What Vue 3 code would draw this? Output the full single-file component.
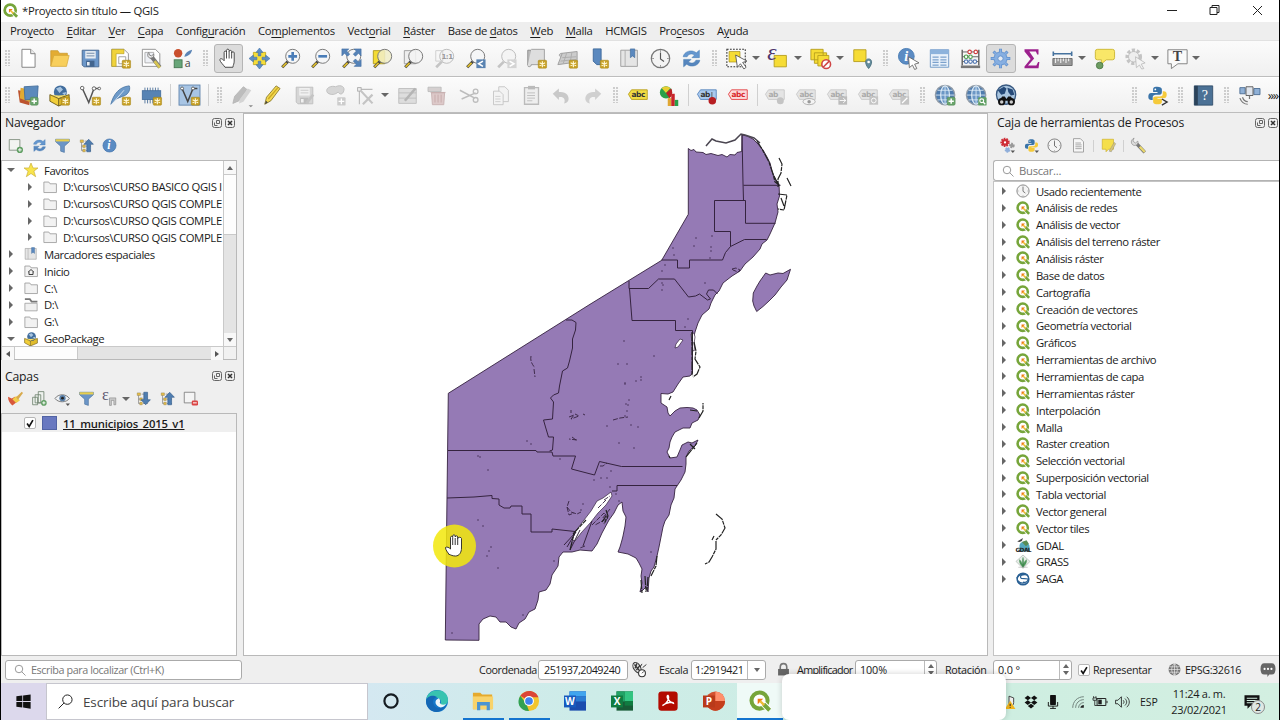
<script setup>
import { ref } from "vue";

// Shared icon fragments, all on a 24x24 grid.
const star =
  '<rect x="14" y="14" width="9.500" height="9" rx="1" fill="#c9a227" stroke="#a58212" stroke-width=".6"/><path d="M18.700 15v7M15.600 16.800l6.200 3.500M15.600 20.300l6.200-3.500" stroke="#fff8d8" stroke-width="1.300"/>';
const plus =
  '<rect x="14" y="14" width="9" height="9" rx="1.500" fill="#6aa56c" stroke="#4c8450" stroke-width=".6"/><path d="M18.500 15.500v6M15.500 18.500h6" stroke="#fff" stroke-width="1.700"/>';
const lens = (fill = "#f4f6f7", line = "#777", handle = "#d9b92c") =>
  `<path d="M9 15.500L2.500 22" stroke="#444" stroke-width="3.400"/><path d="M7.500 17L3 21.500" stroke="${handle}" stroke-width="2.200"/><circle cx="14.500" cy="9.500" r="8" fill="${fill}" fill-opacity=".85" stroke="${line}" stroke-width="1.100"/>`;
const paleLens =
  '<path d="M9 15.500L2.500 22" stroke="#c4c4c4" stroke-width="3"/><circle cx="14.500" cy="9.500" r="8" fill="#f4f4f4" stroke="#bbb" stroke-width="1.100"/>';
const tag = (fill, line, text, word = "abc") =>
  `<path d="M.5 10.500l3.500-5h18v11H4z" fill="${fill}" stroke="${line}" stroke-width="1"/><text x="4" y="14" font-family="DejaVu Sans" font-size="8.500" font-weight="700" letter-spacing="-.5" fill="${text}">${word}</text>`;
const refresh =
  '<path d="M2.500 10c1-6 9.500-9 15-4.500L21 2.500V11h-8.500l3-3C12 5.500 8 7 7 10z" fill="#6597cf" stroke="#447ab2" stroke-width=".6"/><path d="M21.500 14c-1 6-9.500 9-15 4.500L3 21.500V13h8.500l-3 3c3.500 2.500 7.500 1 8.500-2z" fill="#5686be" stroke="#447ab2" stroke-width=".6"/>';
const globe =
  '<circle cx="11.500" cy="11.500" r="11" fill="#4f7cae" stroke="#8f9aa6" stroke-width="1.600"/><ellipse cx="11.500" cy="11.500" rx="5" ry="10.500" fill="#6b97c5" stroke="#dceaf6" stroke-width="1.400"/><path d="M1 11.500h21M3 6h17M3 17h17M11.500 1v21" stroke="#dceaf6" stroke-width="1" fill="none"/>';
const qgis =
  '<circle cx="11.500" cy="11.500" r="8.800" fill="#fff" stroke="#76a53a" stroke-width="4.400"/><path d="M13.500 13l9 9" stroke="#fff" stroke-width="6.500"/><path d="M16 15.500l6.500 6.500" stroke="#76a53a" stroke-width="4.500"/><path d="M9.500 9.500h6l-6 6z" fill="#ee7913"/><path d="M12 12l4.500 4.500" stroke="#eebb35" stroke-width="2.600"/>';
const clock =
  '<circle cx="12" cy="12" r="10.500" fill="#f4f4f4" stroke="#777" stroke-width="1.400"/><path d="M12 5v7.500l4 3" fill="none" stroke="#555" stroke-width="1.300"/><path d="M12 2.500v2M12 19.500v2M2.500 12h2M19.500 12h2" stroke="#888"/>';
const folder = '<path d="M1.500 3.500H10l2 3h11v15H1.500z" fill="#f2f2f2" stroke="#999" stroke-width="1.400"/>';
const box =
  '<path d="M1 11l10 4.500V24L1 18.500z" fill="#f1ce39"/><path d="M11 15.500L23 11v8l-12 5z" fill="#e0bc2c"/><circle cx="13" cy="8" r="7.500" fill="#426e9e"/><path d="M8 4l5-2 3 3-4 4zM15 9l5-1-2 4z" fill="#a7c4e0"/><path d="M1 11l10 4.500L23 11l-12 1z" fill="#f6de6a"/><path d="M1 11l10 4.500L23 11M1 11v7.500L11 24l12-5v-8M11 15.500V24" fill="none" stroke="#695715" stroke-width="1"/>';
const python =
  '<path d="M11.500 2C7 2 7 4 7 5.500V8h5v1H5c-3 0-3.500 2-3.500 4.500S2.500 17 5 17h1.500v-3c0-2 1.500-3 3.500-3h4.500C16 11 17 10 17 8V5c0-2-2-3-5.500-3z" fill="#3a74a9"/><path d="M12.500 22c4.500 0 4.500-2 4.500-3.500V16h-5v-1h7c3 0 3.500-2 3.500-4.500S21.500 7 19 7h-1v3.500c0 2-1.500 2.500-3.500 2.500H10c-2 0-3 1-3 2.500V19c0 2 2 3 5.500 3z" fill="#f5ca3b"/><circle cx="9.500" cy="5" r="1" fill="#fff"/>';
const floppy = (main, shade, face) =>
  `<path d="M2.500 2.500h19v19H4.500l-2-2z" fill="${main}" stroke="${shade}"/><rect x="6" y="3.500" width="12" height="8.500" fill="${face}"/><path d="M7.500 6h9M7.500 9h9" stroke="${shade}" stroke-width=".8"/><rect x="7" y="14.500" width="9.500" height="7" fill="${shade}"/><rect x="8" y="16" width="3" height="4" fill="${face}"/>`;
const treeBars =
  '<path d="M2 3h5v4H2zM6 11h4v4H6zM6 18h4v4H6z" fill="#e9c04a" stroke="#8d7a3e" stroke-width=".7"/><path d="M4 7v13h2M4 13h2" fill="none" stroke="#777"/><path d="M9 5h8M11 13h8M11 20h8" stroke="#999" stroke-width="1.500"/>';
const caret = '<path d="M17 20h7l-3.500 4z" fill="#555"/>';

const icons = {
  qgis,
  clock,
  folder,
  refresh,
  python,
  gpkg: box,
  blank: '<path d="M4.500 1.500h10l5 5v15.500h-15z" fill="#fff" stroke="#777"/><path d="M14.500 1.500v5h5" fill="#eee" stroke="#777"/>',
  open: '<path d="M2 20.500V3h8l2 3h9v4" fill="#e3ac33" stroke="#c69727" stroke-width=".8"/><path d="M5.500 8.500H23l-3 12.500H2z" fill="#f8cf5c" stroke="#d4a739" stroke-width=".8"/>',
  save: floppy("#6c97c9", "#43658e", "#e7edf3"),
  layout:
    '<path d="M2 1.500h14l5 5V21H2z" fill="#fff" stroke="#888"/><path d="M2 1.500h14v5H7V21H2z" fill="#f0d33c" stroke="#b39a21" stroke-width=".7"/><path d="M10 10v8h4M10 10h8v4" fill="none" stroke="#999"/>' + star,
  layouts:
    '<path d="M1.500 1.500h15l5 5V21h-20z" fill="#fff" stroke="#888"/><path d="M4.500 5h10v12h-10z" fill="#eef0f5" stroke="#aaa"/><path d="M12 10l9.500 12" stroke="#777" stroke-width="4.500"/><path d="M15.500 15l6 7.500" stroke="#d7c552" stroke-width="3"/><path d="M9 5c-2 1-2 6 1.500 6.500S15 9 14.500 7L12 9 9.500 8z" fill="#eee" stroke="#777"/>',
  style:
    '<circle cx="7" cy="6" r="4.800" fill="#c94f2d"/><path d="M14 10c1-4 4-7 9-8-1 5-4 7-9 8z" fill="#5b84b5"/><rect x="2.500" y="13.500" width="9" height="9" fill="#68a679" stroke="#43764f"/><text x="14.500" y="22" font-family="Open Sans, sans-serif" font-size="12" fill="#444">a</text>',
  pan: '<path d="M8 22c-2-3-5.500-6-6-8.500.5-2 3-1.500 5 1V5c0-2 2.700-2 2.700 0V2.800c0-2 3-2 3 0V4c0-1.700 2.900-1.700 2.900 0v1.500c0-1.500 2.900-1.500 2.900 0V15c0 3-1 4-1.500 7z" fill="#fff" stroke="#333"/><path d="M9.700 5v7M12.700 4v8M15.600 5v7" stroke="#333"/>',
  panSel:
    '<path d="M5 5h14v14H5z" fill="#f6dd38" stroke="#c1a91e"/><path d="M12 0l4 5h-2.500v4h-3V5H8zM12 24l4-5h-2.500v-4h-3v4H8zM0 12l5-4v2.500h4v3H5V16zM24 12l-5-4v2.500h-4v3h4V16z" fill="#5d8ec6" stroke="#3d6da3" stroke-width=".6"/>',
  zoomIn: lens() + '<path d="M14.500 4.500v10M9.500 9.500h10" stroke="#4a7db8" stroke-width="3"/>',
  zoomOut: lens() + '<path d="M9.500 9.500h10" stroke="#4a7db8" stroke-width="3"/>',
  zoomFull:
    lens() +
    '<path d="M1 1h8L6.500 3.500 10 7 7.500 9.500 4 6 1 9zM23 1h-8l2.500 2.500L14 7l2.500 2.500L20 6l3 3zM23 21h-8l2.500-2.500L14 15l2.500-2.500L20 16l3-3z" fill="#5583b8" stroke="#3e6a9d" stroke-width=".6"/>',
  zoomSel: '<path d="M1.500 3h13v15h-13z" fill="#f4dc35" stroke="#ad981e"/>' + lens("#f0edc8"),
  zoomLayer: '<path d="M1.500 3h13v15h-13z" fill="#eee" stroke="#999"/>' + lens("#f3f3f3"),
  zoomNative: paleLens + '<path d="M2 3h8v12H2z" fill="none" stroke="#ccc"/><text x="8.500" y="12.500" font-family="DejaVu Sans" font-size="8" font-weight="700" letter-spacing="-.5" fill="#999">1:1</text>',
  zoomLast: lens() + '<rect x="13" y="13" width="10.500" height="10" fill="#5a83b1"/><path d="M20.500 15l-5 3 5 3" fill="none" stroke="#fff" stroke-width="1.800"/>',
  zoomNext: paleLens + '<rect x="13" y="13" width="10.500" height="10" fill="#d4d4d4"/><path d="M15.500 15l5 3-5 3" fill="none" stroke="#fff" stroke-width="1.800"/>',
  mapView: '<path d="M2 2.500h4v17H2z" fill="#bbb" stroke="#888"/><path d="M6 1.500h15V19H6c0 3-4 3-4 1" fill="#dedede" stroke="#999"/>' + star,
  map3d: '<path d="M6 6l17-2v12L1 19zM6 6C2 6 2 9 4 10" fill="#ccc" stroke="#999"/><path d="M6 11l16-1M4 15l18-2M11 6l-4 12M17 5l-2 12" stroke="#aaa" fill="none"/>' + star,
  bookmarkNew: '<path d="M6 1h9v18H10L6 15z" fill="#5b89bf" stroke="#3c6799"/>' + star,
  bookmarks: '<path d="M2 2.500h19v18.500H2z" fill="#e5e5e5" stroke="#999"/><path d="M7 2.500V21" stroke="#aaa"/><path d="M13 1h5v10l-2.500-2-2.500 2z" fill="#5b89bf" stroke="#3c6799" stroke-width=".7"/>',
  select:
    '<path d="M1 1.500h21v20H1z" fill="#fafafa" stroke="#333" stroke-width="1.200" stroke-dasharray="2 1.500"/><path d="M3.500 4H16v12H3.500z" fill="#f6dc35" stroke="#a8911b" stroke-width=".8"/><path d="M11 8l13 7-5 1.500 4 5.500-2.500 2-4-6-3.500 4z" fill="#fff" stroke="#555"/>',
  selectExp: '<path d="M7 8.500h14V21.500H7z" fill="#f6dc35" stroke="#b59d1c"/><text x="-1" y="13.500" font-family="Liberation Serif" font-size="27" font-style="italic" fill="#4b346b">ε</text>',
  deselect:
    '<path d="M1 1.500h14v12H1zM5 5.500h14v12H5z" fill="#f6dc35" stroke="#b59d1c"/><path d="M9 8.500h12.500v12H9z" fill="#f6dc35" stroke="#b59d1c"/><circle cx="18.500" cy="18.500" r="5" fill="#fff" stroke="#cf4545" stroke-width="1.800"/><path d="M15 22l7-7" stroke="#cf4545" stroke-width="1.800"/>',
  selectLoc: '<path d="M2 2h14v13.500H2z" fill="#f6dc35" stroke="#b59d1c"/><path d="M19 23.500c-5-6-4-11 0-11s5 5 0 11z" fill="#668d9d" stroke="#49707f"/><circle cx="19" cy="16" r="1.500" fill="#fff"/>',
  identify:
    '<circle cx="9.500" cy="9.500" r="9" fill="#5b8bc3" stroke="#467ab2"/><text x="7" y="15" font-family="Liberation Serif" font-size="16" font-weight="700" font-style="italic" fill="#fff">i</text><path d="M12 10l12 7-5 1.500 2.500 5-2.500 1-2.500-5-3.500 3z" fill="#fff" stroke="#666"/>',
  table: '<path d="M1.500 2h21v20h-21z" fill="#e8f1fa" stroke="#6893c4"/><path d="M1.500 2h21v5h-21z" fill="#8db3dc"/><path d="M4 10.500h7M4 13.500h7M4 16.500h7M4 19.500h7M13 10.500h7M13 13.500h7M13 16.500h7M13 19.500h7" stroke="#7ba1cc" stroke-width="1.500"/>',
  abacus:
    '<path d="M2.500 2v18M21.500 2v18" fill="none" stroke="#555" stroke-width="1.500"/><path d="M1 20h22v3H1z" fill="#777"/><path d="M3 4.500h18M3 10h18M3 15.500h18" stroke="#555"/><g fill="#fff" stroke-width="1.300"><circle cx="11" cy="4.500" r="2" stroke="#ce3d3d"/><circle cx="18" cy="4.500" r="2" stroke="#ce3d3d"/><circle cx="7" cy="10" r="2" stroke="#4c9c4c"/><circle cx="12" cy="10" r="2" stroke="#4c9c4c"/><circle cx="7" cy="15.500" r="2" stroke="#5479b3"/><circle cx="12" cy="15.500" r="2" stroke="#5479b3"/><circle cx="17" cy="15.500" r="2" stroke="#5479b3"/></g>',
  gear: '<g stroke="#5e8fcd" stroke-width="3.400"><path d="M12 .8v22.400M.8 12h22.400M4 4l16 16M20 4L4 20"/></g><circle cx="12" cy="12" r="7.500" fill="#87afe1" stroke="#5e8fcd"/><g stroke="#87afe1" stroke-width="1.800"><path d="M12 1.500v21M1.500 12h21M4.500 4.500l15 15M19.500 4.500l-15 15"/></g><circle cx="12" cy="12" r="3" fill="#e5eaf1" stroke="#5e8fcd"/>',
  sigma: '<path d="M4 1.500h16v6h-1.500L17 4H9.500l5.500 8-7 8h9.500l2-4H21l-1 7H4v-2l7-8.500L4 4z" fill="#9c208d"/>',
  measure: '<path d="M1.500 6.500h21M1.500 4v5M22.500 4v5" stroke="#45729e" stroke-width="1.800"/><path d="M1 12h22v8H1z" fill="#999" stroke="#666"/><path d="M4 12v5M7 12v3M10 12v5M13 12v3M16 12v5M19 12v3" stroke="#eee" stroke-width="1.300"/>',
  tips: '<path d="M4 1.500h17q2.500 0 2.500 2.500v7q0 2.500-2.500 2.500h-7L7.500 19l1-5.500H4Q1.500 13.500 1.500 11V4Q1.500 1.500 4 1.500z" fill="#f9e768" stroke="#c9b32d"/><circle cx="6.500" cy="20" r="3.800" fill="#6d9c62" stroke="#4b7843"/>',
  action: '<circle cx="10" cy="10" r="7.500" fill="none" stroke="#c4c4c4" stroke-width="4" stroke-dasharray="3.500 2"/><circle cx="10" cy="10" r="6" fill="#eee" stroke="#bbb"/><path d="M12 10l11 7-4.500 1.500 3 5-2.500.5-2.500-4.500-3.500 3z" fill="#f4f4f4" stroke="#bbb"/>',
  annotation: '<path d="M1 2h22v16H12.500L5 23.500V18H1z" fill="#fafafa" stroke="#777"/><text x="6.500" y="15" font-family="Liberation Serif" font-size="16" font-weight="700" fill="#444">T</text>',
  layers: '<path d="M0 6l14 2-1 15-11-3z" fill="#bc542f"/><path d="M3 3l14 3-2 14L2 15z" fill="#e1aa33"/><path d="M7 2l16-1-1 15-14 1z" fill="#5b8abc" stroke="#416d9c"/>' + plus,
  gpkgNew: box + star,
  vectorNew: '<path d="M2.500 3.500L10 20l6-16h6" fill="none" stroke="#555" stroke-width="1.700"/><g fill="#fff" stroke="#555"><circle cx="2.500" cy="3.500" r="2"/><circle cx="16" cy="4" r="2"/><circle cx="22" cy="4" r="1.500"/></g>' + star,
  feather: '<path d="M1 22C4 10 11 2 22 1c2 5-2 11-8 12L7 16z" fill="#6d9ac9" stroke="#4b77a5"/><path d="M1 23L16 6" stroke="#dfeaf5"/>' + star,
  memory: '<path d="M4.500 3v18M7.500 3v18M10.500 3v18M13.500 3v18M16.500 3v18M19.500 3v18" stroke="#4c7099"/><rect x="1.500" y="6.500" width="21" height="10" fill="#5783b4" stroke="#456f9e"/>' + star,
  virtual: '<rect x="0" y="0" width="24" height="23" fill="#a8c5e4" stroke="#5d82ab"/><path d="M3.500 4L10 19l6-15h5" fill="none" stroke="#444" stroke-width="1.700"/><g fill="#fff" stroke="#555"><circle cx="3.500" cy="4" r="1.700"/><circle cx="16" cy="4" r="1.700"/></g>' + star,
  pencilGray: '<path d="M1 21l2-8L13 2l4 3L8 18z" fill="#bdbdbd" stroke="#b4b4b4"/><path d="M8 21l1-5 9-12 4 2-9 13z" fill="#d4d4d4"/><path d="M19 23h5l-2.500 2.500z" fill="#888"/>',
  pencil: '<path d="M2 22l2-8L15 1l4.500 3L9 18z" fill="#f3d850" stroke="#8a7a2c"/><path d="M6 16L17 3" stroke="#cba921" stroke-width="1.500"/><path d="M2 22l1.500-4 2 2z" fill="#444"/>',
  saveEdits: floppy("#d6d6d6", "#bdbdbd", "#f1f1f1") + '<path d="M14 21l8-10" stroke="#c4c4c4" stroke-width="3"/>',
  addFeature: '<path d="M3 9c-4-5 4-9 9-7 6-3 12 0 9 6-2 4-5 2-6 0-3 3-8 4-12 1z" fill="#d6d6d6" stroke="#bdbdbd"/><rect x="14" y="14" width="9.500" height="9.500" rx="1" fill="#ccc"/><path d="M18.700 15.500v6.500M15.500 18.700H22" stroke="#fff" stroke-width="1.500"/>',
  vertex: '<path d="M5 22V5h15" fill="none" stroke="#bbb" stroke-width="1.300"/><rect x="3" y="3" width="4" height="4" fill="#eee" stroke="#aaa"/><path d="M7 7l13 14M20 11L9 22" stroke="#c4c4c4" stroke-width="2.500"/>',
  modify: '<path d="M2 4h20v17H2z" fill="#ddd" stroke="#bbb"/><path d="M2 9h20M2 15h20" stroke="#bbb"/><path d="M9 18L21 4" stroke="#b5b5b5" stroke-width="3"/>',
  trash: '<path d="M0 2.500h15v5H0z" fill="#d5d0d0" stroke="#bbb"/><path d="M4 9h15l-1 13.500H5z" fill="#ddc9c9" stroke="#c7b1b1"/><path d="M8 11v9M11.500 11v9M15 11v9M3 8.500h17" stroke="#c4a8a8"/>',
  cut: '<path d="M1 6l17 9M3 16L19 9" stroke="#bdbdbd" stroke-width="1.800"/><circle cx="19" cy="7.500" r="2.700" fill="none" stroke="#bdbdbd" stroke-width="1.500"/><circle cx="19" cy="17" r="2.700" fill="none" stroke="#bdbdbd" stroke-width="1.500"/>',
  copy: '<path d="M10 2h7l4 4v13H10z" fill="#f3f3f3" stroke="#c3c3c3"/><path d="M4 7h7l4 4v11.500H4z" fill="#f3f3f3" stroke="#c3c3c3"/><path d="M6 13h6M6 16h6M6 19h6" stroke="#ccc"/>',
  paste: '<path d="M4 3h16v19H4z" fill="#eee" stroke="#bbb" stroke-width="1.500"/><path d="M8 1h8v4H8z" fill="#bbb"/><path d="M7 9h9M7 12h9M7 15h9M7 18h6" stroke="#bbb"/>',
  undo: '<path d="M2 10l7-6v4c8-1 12 4 11 9-1 3-4 4-5 4 2-5-1-8-6-7v3z" fill="#c9c9c9"/>',
  redo: '<path d="M22 10l-7-6v4C7 7 3 12 4 17c1 3 4 4 5 4-2-5 1-8 6-7v3z" fill="#d0d0d0"/>',
  label: tag("#f2dc43", "#b89e1a", "#333"),
  diagram: '<circle cx="8" cy="8.500" r="7" fill="#2aa04a"/><path d="M8 9L3 3.500c3-3 8-2 10 0z" fill="#eace32"/><path d="M8 9l6-5c2 4 1 9-2 11z" fill="#bd2026"/><path d="M10 15h4v9h-4z" fill="#e0a733"/><path d="M14 10h4v14h-4z" fill="#c9242a"/><path d="M18 17h4v7h-4z" fill="#2aa04a"/>',
  labelPin: tag("#a9c9ef", "#5684bb", "#333", "ab") + '<path d="M17 8v9" stroke="#555"/><circle cx="17.500" cy="18" r="4.300" fill="#b71e22"/>',
  labelRed: tag("#fbdada", "#e33a3e", "#d9262b"),
  labelHi: tag("#e4e4e4", "#c8c8c8", "#aaa", "ab") + '<circle cx="17.500" cy="18" r="4" fill="#c4c4c4"/>',
  labelEye: tag("#e4e4e4", "#c8c8c8", "#aaa") + '<ellipse cx="15" cy="19" rx="7" ry="3.500" fill="#f4f4f4" stroke="#aaa"/><circle cx="15" cy="19" r="2" fill="#999"/>',
  labelMove: tag("#e4e4e4", "#c8c8c8", "#aaa") + '<rect x="13" y="13" width="10" height="9.500" fill="#bcbcbc"/><path d="M14.500 17.700h7L18.500 15m3 2.700l-3 2.700" fill="none" stroke="#fff"/>',
  labelRot: tag("#e4e4e4", "#c8c8c8", "#aaa") + '<rect x="13" y="13" width="10" height="9.500" fill="#c4c4c4"/><circle cx="18" cy="17.700" r="2.700" fill="none" stroke="#fff"/>',
  labelEdit: tag("#e4e4e4", "#c8c8c8", "#aaa") + '<rect x="13" y="13" width="10" height="9.500" fill="#c4c4c4"/><path d="M15 20.500l6-6" stroke="#fff" stroke-width="1.500"/>',
  globeAdd: globe + plus,
  globeZoom: globe + '<rect x="14" y="14" width="9.500" height="9.500" rx="1" fill="#5e9e62"/><circle cx="18" cy="18" r="2.200" fill="none" stroke="#fff" stroke-width="1.300"/><path d="M19.500 19.500l2.500 2.500" stroke="#fff" stroke-width="1.500"/>',
  globeFind: '<circle cx="11.500" cy="11" r="11" fill="#a9c5df" stroke="#385981" stroke-width="1.500"/><path d="M2 6l7-4 3 2-2 6-4 1zM13 3l6 2 2 6-4 1-3-4z" fill="#264a78"/><path d="M4 18l3-5h3l2 3 2-3h3l3 5z" fill="#111"/><circle cx="6.500" cy="19" r="4.200" fill="#111"/><circle cx="17.500" cy="19" r="4.200" fill="#111"/><circle cx="6.500" cy="19.500" r="2" fill="#ccc"/><circle cx="17.500" cy="19.500" r="2" fill="#ccc"/>',
  pyConsole: python + '<path d="M17 16l6 3.500-6 3.500" fill="none" stroke="#333" stroke-width="1.500"/>',
  help: '<path d="M1.500 1h21v22h-21z" fill="#4b7195" stroke="#304d69"/><path d="M1.500 1h4v22h-4z" fill="#2b4259"/><text x="10" y="17" font-family="Liberation Serif" font-size="16" fill="#fff">?</text>',
  gps: '<path d="M1 3h6v7H1zM17 4h7v7h-7z" fill="#8fb0d6" stroke="#4a6b91"/><path d="M8 2h8v10H8z" fill="#e0e5ec" stroke="#555"/><path d="M12 12v4M4 14c1 3 3 5 6 5M1 15c2 5 4 7 9 7" fill="none" stroke="#777" stroke-width="1.400"/>',
  addLayer: '<path d="M2 2.500h17v17H2z" fill="#f2f4f1" stroke="#7f8e7e" stroke-width="1.400"/><circle cx="19" cy="19" r="5" fill="#5f9e62"/><path d="M16 19h6M19 16v6" stroke="#fff" stroke-width="1.500"/>',
  filter: '<path d="M1 2h22v4l-8 7v10l-6-2v-8L1 6z" fill="#6b95c7" stroke="#4b739f"/><path d="M1 2h22v3.500H1z" fill="#e8ce4d"/>',
  collapse: treeBars + '<path d="M15.500 2l7.500 8h-4.500v12h-6V10H8z" fill="#4f7db0" stroke="#355d8b"/>',
  expand: treeBars + '<path d="M15.500 22l7.500-8h-4.500V2h-6v12H8z" fill="#4f7db0" stroke="#355d8b"/>',
  info: '<circle cx="12" cy="12" r="10.500" fill="#5a8bc3" stroke="#3f70a8"/><text x="8.500" y="18" font-family="Liberation Serif" font-size="19" font-weight="700" font-style="italic" fill="#fff">i</text>',
  brush: '<path d="M0 9l6 3 5-3 5 7-9 7C3 20 0 15 0 9z" fill="#d8583b"/><path d="M7 13l6-5 6 7-6 4z" fill="#f0ce4b"/><path d="M13 10l9-9 2 2-8 11z" fill="#d8aa4c"/>',
  group: '<path d="M1 10h8v12H1zM5 6h9v13H5zM10 1h9v18h-9z" fill="#eef2ee" stroke="#6d806d" stroke-width="1.300"/><circle cx="19" cy="19" r="4.500" fill="#5f9e62"/><path d="M16.500 19h5M19 16.500v5" stroke="#fff" stroke-width="1.500"/>',
  eye: '<path d="M0 12C5 4 18 4 23 12c-5 7-18 7-23 0z" fill="#eef1f4" stroke="#777" stroke-width="1.500"/><circle cx="12" cy="11.500" r="5" fill="#597fa8"/><circle cx="12" cy="11.500" r="2.200" fill="#222"/>' + caret,
  epsilon: '<text x="0" y="15" font-family="Liberation Serif" font-size="26" fill="#5c5670">ε</text><path d="M12 11h10v11h-3v-7h-4v8h-3z" fill="#c8c8c8" stroke="#888"/>',
  remove: '<path d="M2 2h17v17H2z" fill="#f4f4f4" stroke="#777" stroke-width="1.300"/><rect x="14" y="15" width="10" height="8" rx="2" fill="#db4646"/><path d="M16 19h6" stroke="#fff" stroke-width="1.700"/>',
  star: '<path d="M12 0l3.500 8.500H24l-7 5.500 3 9.500-8-5.500-8 5.500L7 14 0 8.500h8.500z" fill="#f8e44c" stroke="#c2a62a"/>',
  home: folder + '<path d="M7 14l5-4.500 5 4.500M8.500 13v5h7v-5" fill="none" stroke="#333" stroke-width="1.600"/>',
  drive: '<path d="M1.500 2H10l3 4h10" fill="none" stroke="#777" stroke-width="3"/><path d="M1.500 9h21v13h-21z" fill="#f0f0f0" stroke="#999" stroke-width="1.300"/>',
  models: '<g stroke-dasharray="2.400 1.500"><circle cx="8" cy="7" r="5.500" fill="#ce2d37" stroke="#ce2d37" stroke-width="4"/><circle cx="19" cy="12" r="3" fill="#999" stroke="#999" stroke-width="3"/><circle cx="12" cy="19" r="3.500" fill="#8faeda" stroke="#8faeda" stroke-width="2"/></g><circle cx="8" cy="7" r="1.800" fill="#fff"/>' + caret,
  scripts: python + caret,
  results: '<path d="M4 1h11l5 5v16.500H4z" fill="#f7f7f7" stroke="#999" stroke-width="1.400"/><path d="M7 8h9M7 11h10M7 14h10M7 17h10" stroke="#999" stroke-width="1.300"/>',
  inPlace: '<path d="M2 2h18v16h-8l-4 4v-4H2z" fill="#f5df4b" stroke="#c9ac23"/><path d="M13 21l8-14 2.500 2-7 13z" fill="#d8c678" stroke="#888" stroke-width=".7"/>',
  wrench: '<path d="M9 9l13 14" stroke="#777" stroke-width="5.500"/><path d="M14 14l8 8.500" stroke="#ead86b" stroke-width="3.700"/><path d="M5 0C-1 3-1 10 5 12c5 0 7-4 6-7L7 8 3 5z" fill="#ddd" stroke="#888"/>',
  gdal: '<path d="M6 13C6 4 21 4 23 13l1 10H6z" fill="#54a8bd"/><path d="M10 7l8-3 4 6-5 4z" fill="#588c54"/><path d="M2 6l10-6-2 5-4 2z" fill="#444"/><text x="-1" y="24" font-family="DejaVu Sans" font-size="10" font-weight="700" letter-spacing="-1" fill="#222">GDAL</text>',
  grass: '<path d="M12 0l12 11-12 12L0 11z" fill="#e7eee8" stroke="#a0aaa2"/><path d="M12 21C8 17 5 13 6 8c3 2 5 6 6 13zM12 21c-1-5-2-10 0-17 2 7 1 12 0 17zM12 21c0-6 2-10 6-13 1 5-2 9-6 13z" fill="#4f9a5b" stroke="#327b42" stroke-width=".6"/><path d="M4 21h16" stroke="#aaa"/>',
  saga: '<circle cx="12" cy="12" r="10" fill="#fff" stroke="#296094" stroke-width="2.600"/><path d="M19 5C11 3 5 7 9 11l12 1c-1 5-5 7-9 5M1 11C5 5 10 3 14 4M3 15c5 5 10 5 14 2" fill="none" stroke="#296094" stroke-width="2"/>',
  search: '<circle cx="10" cy="10" r="7.500" fill="none" stroke="#888" stroke-width="1.700"/><path d="M15.500 15.500L23 23" stroke="#888" stroke-width="1.700"/>',
  mouse: '<ellipse cx="8" cy="9" rx="5.500" ry="9" transform="rotate(-30 8 9)" fill="#ddd" stroke="#333" stroke-width="1.600"/><path d="M4 4l9 11M8 2l-3 8M13 5l-6 8" stroke="#333" stroke-width="2"/><circle cx="16" cy="18" r="5.500" fill="#fff" stroke="#333" stroke-width="1.700"/><path d="M13 8l3-5M17 9l6-5M16 18l3-3" stroke="#333" stroke-width="1.500"/>',
  lock: '<path d="M6 11V8c0-9 12-9 12 0v3" fill="none" stroke="#777" stroke-width="3"/><rect x="2" y="11" width="20" height="12" fill="#666"/>',
  crs: '<circle cx="12" cy="12" r="11" fill="#777"/><path d="M1 12h22M3 7h18M3 17h18M12 1v22M12 1c-7 7-7 15 0 22M12 1c7 7 7 15 0 22" fill="none" stroke="#eee" stroke-width="1.200"/>',
  messages: '<path d="M6 2h12q6 0 6 9t-6 9h-4l-3 4v-4H6q-6 0-6-9t6-9z" fill="#666"/><circle cx="6.500" cy="11" r="1.700" fill="#fff"/><circle cx="12" cy="11" r="1.700" fill="#fff"/><circle cx="17.500" cy="11" r="1.700" fill="#fff"/>',
  // Taskbar
  windows: '<path d="M3 5.500l7.500-1v7H3zM11.500 4.300L21 3v8.500h-9.500zM3 12.500h7.500v7L3 18.500zM11.500 12.500H21V21l-9.500-1.300z" fill="#111"/>',
  find: '<circle cx="15" cy="9" r="7.500" fill="none" stroke="#222" stroke-width="1.600"/><path d="M9.500 14.500L1 23" stroke="#222" stroke-width="1.600"/>',
  cortana: '<circle cx="12" cy="12" r="7.200" fill="none" stroke="#151c22" stroke-width="2.400"/>',
  edge: '<circle cx="12" cy="12" r="12" fill="#1678c9"/><path d="M.5 10C2-3 24-3 24 11c0 5-5 7-9 5 4-4-1-9-7-8-4 0-6 1-7.500 2z" fill="#38c3b0"/><path d="M0 12C1 6 9 5 12 8c-7 1-5 11 2 12 3 0 5-1 8-3-7 12-22 7-22-5z" fill="#1467b5"/><path d="M14 9c-6 2-4 9 2 10 3 0 5-2 6-4-3 2-6 1-7-1 1-2 0-4-1-5z" fill="#edf6fa"/>',
  explorer: '<path d="M1 3h8l2 2h11v16H1z" fill="#e5aa2d"/><path d="M1 7h22v14H1z" fill="#f8d36b"/><path d="M5.500 22v-9h14v9H16v-5H9v5z" fill="#4a94d2"/>',
  chrome: '<circle cx="12" cy="12" r="11" fill="#f3c52d"/><path d="M12 12L2.500 6.300C8-1.500 19.500-.5 22.300 8H12z" fill="#db4537"/><path d="M2.500 6.300L9 15l3 8C1 23-2 13 2.500 6.300z" fill="#32a152"/><circle cx="12" cy="12" r="5.400" fill="#fff"/><circle cx="12" cy="12" r="4.200" fill="#4083ed"/>',
  word: '<path d="M6 1.500h18v21H6z" fill="#1b4cae"/><path d="M6 1.500h18v5.500H6z" fill="#41a5ee"/><path d="M6 7h18v5.500H6z" fill="#2b7cd3"/><rect x="0" y="6" width="13" height="13" fill="#185abd"/><text x="1" y="16" font-family="Open Sans, sans-serif" font-size="11" font-weight="700" fill="#fff">W</text>',
  excel: '<path d="M6 1.500h18v21H6z" fill="#185c37"/><path d="M6 1.500h9v11H6z" fill="#21a366"/><path d="M15 1.500h9v11h-9z" fill="#33c481"/><path d="M15 12h9v5h-9z" fill="#107c41"/><rect x="0" y="6" width="13" height="13" fill="#107c41"/><text x="3" y="16" font-family="Open Sans, sans-serif" font-size="11" font-weight="700" fill="#fff">X</text>',
  acrobat: '<rect x="1.500" y="1.500" width="21" height="21" rx="3.500" fill="#b30b00"/><path d="M6 17c5-2 8-8 6-11-2 0-1 6 6 8.500 0-2-8-1-12 2.500z" fill="none" stroke="#fff" stroke-width="1.500"/>',
  powerpoint: '<circle cx="13.500" cy="12" r="10.500" fill="#d35230"/><path d="M13.500 1.500A10.500 10.500 0 0124 12H13.500z" fill="#ff8f6b"/><path d="M3 12h21c0 5-4 10.500-10.500 10.500S3 17 3 12z" fill="#c43e1c"/><rect x="0" y="6" width="13" height="13" fill="#b93a1a"/><text x="3" y="16" font-family="Open Sans, sans-serif" font-size="11" font-weight="700" fill="#fff">P</text>',
  shield: '<path d="M12 2l8 3v8c0 5-4 7-8 9z" fill="#eee" stroke="#333" stroke-width="1.500"/><path d="M14 10l9 14H5z" fill="#f2b51c"/><path d="M14 15v4M14 20.500v1.500" stroke="#222" stroke-width="1.700"/>',
  dropbox: '<path d="M6.500 1l5.500 4-5.500 4L1 5zM17.500 1L23 5l-5.500 4L12 5zM6.500 9l5.500 4-5.500 4L1 13zM17.500 9l5.500 4-5.500 4-5.500-4zM12 15l5.500 4-5.500 4-5.500-4z" fill="#111"/>',
  mic: '<rect x="7" y="0" width="10" height="17" rx="1" fill="#111"/><path d="M4 12v7h16v-7M12 19v4M7 23h10" fill="none" stroke="#111" stroke-width="1.600"/>',
  wifi: '<path d="M3 22C3 11 11 3 22 3M8 22C8 14 14 8 22 8M13 22c0-5 4-9 9-9" fill="none" stroke="#71837c" stroke-width="1.700"/><path d="M16 22c0-3 3-5 6-5v5z" fill="#222"/>',
  battery: '<path d="M7 6h15v12H7zM24 10v4" fill="none" stroke="#222" stroke-width="1.700"/><rect x="9" y="8" width="6" height="8" fill="#222"/><path d="M0 5h6v4H0zM3 9v9h4M1 2v3M5 2v3" fill="none" stroke="#222" stroke-width="1.400"/>',
  speaker: '<path d="M1 9h4l6-6v18l-6-6H1z" fill="none" stroke="#222" stroke-width="1.500"/><path d="M14 9c2 2 2 4 0 6M17 6c4 4 4 8 0 12M20 3c6 5 6 13 0 18" fill="none" stroke="#222" stroke-width="1.400"/>',
  notify: '<path d="M2 3h20v14H10l-4 4v-4H2z" fill="#111"/><path d="M5 7h14M5 10h14M5 13h10" stroke="#d4efe2" stroke-width="1.400"/>',
};

// Menu entries: text before, mnemonic, text after.
const menus = [
  ["Pro", "y", "ecto"],
  ["", "E", "ditar"],
  ["", "V", "er"],
  ["", "C", "apa"],
  ["Config", "u", "ración"],
  ["Co", "m", "plementos"],
  ["Vect", "o", "rial"],
  ["", "R", "áster"],
  ["Base de ", "d", "atos"],
  ["", "W", "eb"],
  ["", "M", "alla"],
  ["HCMGIS", "", ""],
  ["Pro", "c", "esos"],
  ["A", "y", "uda"],
];

// "-grip", "-sep" and "-space" are layout pieces, ">" adds a drop-down arrow, "*" marks a pressed button.
const parse = (line) =>
  line.split(" ").map((token) => ({
    kind: token.startsWith("-") ? token.slice(1) : "tool",
    icon: token.replace(/[>*]/g, ""),
    menu: token.includes(">"),
    pressed: token.includes("*"),
  }));

const toolbars = [
  parse(
    "-grip blank open save layout layouts style -grip pan* panSel zoomIn zoomOut zoomFull zoomSel zoomLayer zoomNative zoomLast zoomNext mapView map3d bookmarkNew bookmarks clock refresh -grip select> selectExp> deselect> selectLoc -grip identify table abacus gear* sigma measure> tips action> annotation>",
  ),
  parse(
    "-grip layers gpkgNew vectorNew feather memory -sep virtual -sep -grip pencilGray pencil saveEdits addFeature vertex> modify trash cut copy paste undo redo -grip label diagram -sep labelPin labelRed -sep labelHi labelEye labelMove labelRot labelEdit -grip globeAdd globeZoom globeFind -space -grip pyConsole -grip help -grip gps",
  ),
];

const browserTools = ["addLayer", "refresh", "filter", "collapse", "info"];
const browserRows = [
  { icon: "star", text: "Favoritos", open: true },
  { icon: "folder", text: "D:\\cursos\\CURSO BASICO QGIS I", child: true },
  { icon: "folder", text: "D:\\cursos\\CURSO QGIS COMPLE", child: true },
  { icon: "folder", text: "D:\\cursos\\CURSO QGIS COMPLE", child: true },
  { icon: "folder", text: "D:\\cursos\\CURSO QGIS COMPLE", child: true },
  { icon: "bookmarks", text: "Marcadores espaciales" },
  { icon: "home", text: "Inicio" },
  { icon: "folder", text: "C:\\" },
  { icon: "drive", text: "D:\\" },
  { icon: "folder", text: "G:\\" },
  { icon: "gpkg", text: "GeoPackage", open: true },
];
const layerTools = parse("brush group eye filter epsilon> expand collapse remove");

const providers = [
  ["clock", "Usado recientemente"],
  ...[
    "Análisis de redes",
    "Análisis de vector",
    "Análisis del terreno ráster",
    "Análisis ráster",
    "Base de datos",
    "Cartografía",
    "Creación de vectores",
    "Geometría vectorial",
    "Gráficos",
    "Herramientas de archivo",
    "Herramientas de capa",
    "Herramientas ráster",
    "Interpolación",
    "Malla",
    "Raster creation",
    "Selección vectorial",
    "Superposición vectorial",
    "Tabla vectorial",
    "Vector general",
    "Vector tiles",
  ].map((name) => ["qgis", name]),
  ["gdal", "GDAL"],
  ["grass", "GRASS"],
  ["saga", "SAGA"],
];

const apps = [
  { icon: "cortana" },
  { icon: "edge" },
  { icon: "explorer", running: true },
  { icon: "chrome", running: true },
  { icon: "word" },
  { icon: "excel" },
  { icon: "acrobat" },
  { icon: "powerpoint" },
  { icon: "qgis", running: true, active: true },
];
const tray = ["shield", "dropbox", "mic", "wifi", "battery", "speaker"];

// Small lagoons, drawn as dots on the map.
const ponds = [
  [696, 238], [694, 246], [712, 236], [711, 247], [711, 251], [710, 258], [673, 248], [674, 255], [665, 265], [662, 271],
  [705, 283], [662, 283], [663, 285], [662, 290], [688, 319], [685, 327], [624, 341], [654, 356], [618, 364], [627, 364],
  [625, 383], [636, 381], [641, 380], [625, 384], [629, 400], [626, 404], [628, 405], [627, 411], [625, 416], [631, 425],
  [638, 427], [619, 443], [634, 448], [527, 441], [531, 444], [478, 456], [480, 457], [488, 470], [560, 459], [478, 520],
  [483, 526], [491, 547], [489, 551], [487, 556], [498, 568], [452, 633], [523, 615], [554, 561], [651, 552], [583, 504],
  [581, 510], [616, 494], [619, 501], [610, 487], [594, 480], [601, 478], [607, 478], [611, 471], [641, 377], [607, 426],
];

const locator = ref("");
const toolSearch = ref("");
const taskSearch = ref("");
const visible = ref(true);
const render = ref(true);
</script>

<template>
  <div class="screen">
    <header class="titlebar">
      <svg class="icon app-icon" viewBox="0 0 24 24" v-html="icons.qgis" />
      <span class="title">*Proyecto sin título — QGIS</span>
      <svg class="window-buttons" viewBox="0 0 100 20">
        <path d="M2 9.500h10" />
        <path d="M45 6.500h7v7h-7zM47 6.500v-2h7v7h-2" />
        <path d="M88 5l9 9M97 5l-9 9" />
      </svg>
    </header>

    <nav class="menubar">
      <span v-for="(m, i) in menus" :key="i" class="menu">{{ m[0] }}<u>{{ m[1] }}</u>{{ m[2] }}</span>
    </nav>

    <div v-for="(bar, b) in toolbars" :key="b" class="toolbar">
      <template v-for="(item, i) in bar" :key="i">
        <span v-if="item.kind !== 'tool'" :class="item.kind" />
        <span v-else class="tool" :class="{ pressed: item.pressed }">
          <svg class="icon" viewBox="0 0 24 24" v-html="icons[item.icon]" />
        </span>
        <span v-if="item.menu" class="arrow" />
      </template>
      <span v-if="b === 1" class="more">»»</span>
    </div>

    <main class="workspace">
      <aside class="dock left">
        <div class="dock-title">
          <span>Navegador</span>
          <svg class="dock-buttons" viewBox="0 0 24 10"><rect x=".5" y=".5" width="9" height="9" rx="2" /><path d="M4.500 2.500h3v3h-3zM2.500 4.500v3h3" /><rect x="13.500" y=".5" width="9" height="9" rx="2" /><path class="cross" d="M16 3l4 4M20 3l-4 4" /></svg>
        </div>
        <div class="dock-tools">
          <svg v-for="name in browserTools" :key="name" class="icon" viewBox="0 0 24 24" v-html="icons[name]" />
        </div>
        <div class="browser">
          <div class="browser-body">
            <div class="tree">
              <div v-for="(row, i) in browserRows" :key="i" class="row" :class="{ child: row.child }">
                <span class="twisty" :class="{ open: row.open }" />
                <svg class="icon" viewBox="0 0 24 24" v-html="icons[row.icon]" />
                <span class="label">{{ row.text }}</span>
              </div>
            </div>
            <div class="vscroll">
              <span class="cap"><i class="up" /></span>
              <span class="thumb" />
              <span class="cap end"><i class="down" /></span>
            </div>
          </div>
          <div class="hscroll">
            <span class="cap"><i class="back" /></span>
            <span class="thumb" />
            <span class="cap end"><i class="forward" /></span>
            <span class="corner" />
          </div>
        </div>

        <div class="dock-title layers-title">
          <span>Capas</span>
          <svg class="dock-buttons" viewBox="0 0 24 10"><rect x=".5" y=".5" width="9" height="9" rx="2" /><path d="M4.500 2.500h3v3h-3zM2.500 4.500v3h3" /><rect x="13.500" y=".5" width="9" height="9" rx="2" /><path class="cross" d="M16 3l4 4M20 3l-4 4" /></svg>
        </div>
        <div class="dock-tools layer-tools">
          <template v-for="(item, i) in layerTools" :key="i">
            <svg class="icon" viewBox="0 0 24 24" v-html="icons[item.icon]" />
            <span v-if="item.menu" class="arrow" />
          </template>
        </div>
        <div class="layers">
          <div class="layer">
            <span class="check" @click="visible = !visible"><svg v-if="visible" viewBox="0 0 12 12"><path d="M2.500 6l2.500 3.500L9.500 2" /></svg></span>
            <span class="swatch" />
            <span class="layer-name">11_municipios_2015_v1</span>
          </div>
        </div>
      </aside>

      <section class="canvas">
        <svg class="map" viewBox="244 114 743 541">
          <g v-if="visible">
            <path
              class="land"
              d="M448.300 393.300L590 304.300 661.700 260.300 688.300 214.300 688.300 148.500 691 150.500 694 149.500 696 152 703 152.500 706 154.500 711 153.500 718 155.500 722 154.500 727 157 730 154.500 735 155 737 152.500 741.700 151.500 742 135 747 136 753 139 758 144 763 150 767 157 770 163 772 171 775 179 779 184 779.500 196 777 204 778 212 775 223 770 234 767 240 762 244 760 249 753 257 745 264 740 271 732 276 723 283 719 291 715 295 711 303 709 309 702 315 698 323 695 332 692.500 342 692.500 373 690 376 683 377 678 384 673 392 668 394 661 393.500 661 403 667 407 668 413 670 416 675 411 680 408 687 407.500 693 408 697 410 700 415 698 420 692 423 690 428 683 428 675 432 672 437 670 442 669 448 667 452 670 458 677 457 680 450 682 445 688 442 692 443 698 440 695 446 689 451 686 457 686 464 685 472 681 480 675 489 674 498 671 505 669 515 665 521 663 527 661 537 659 547 657 556 654 567 651 571 649 578 648 592 646 587 643 590 640 592 642 583 641 576 642 569 639 563 636 558 628 554 618 552 620 547 622 540 623 536 625 526 626 517 623 511 622 502 618 505 614 513 609 520 602 533 597 544 592 551 580 550 572 552 563 552 559 557 558 566 552 575 550 584 546 590 539 592 538 600 535 609 529 612 525 619 519 623 516 629 511 627 506 622 500 622 496 617 490 616 483 619 479 624 479 640.300 445.300 640 447 497z"
            />
            <path class="land" d="M765.700 273L770 275 778 273 783 273.500 790.500 269.300 787 280 781 287 775 295 769 301 763 306.500 756.700 311.500 754 306 752.700 301 753.300 293 757 286 760 281z" />
            <path
              class="water"
              d="M611 492l-8 6-6 3-6 10-7 9-9 12-3 8 3 1 6-8 10-11 7-9 8-8 6-9zM676 344l4-5 3 1-5 7-3 1zM691 334l3-1 1 4-1 7 1 6-2 1z"
            />
            <path
              class="border"
              d="M742 134l1 49 .5 17.500M743.500 185.300h37M743.500 200.500h2v22.800h30M745 200.500h-30.500v31h16v15l-5 6-3 7.500h-33v8h-12v-8h-16M730.500 246.500l14-7h22M629 281v7.500h19.500l10-9.500h16l14 18 7-1 4-2 8 6 3-1-4-5 2-4 5 0 4 4M629.500 288.500l2.500 32h43.500v10h17l0 43M566 320h6l4 2.500-.5 7.500-3 9 0 9-3 13-2 7-5 3-3 15-1 7-5 2-3 3 3 4-1 17-9 1 2 7 3 10h5l-1 13-3 1M448 450.500h88l1 1.500h15l1 4 22.500 0-4 13 23 6 5-13.500 22 5h61M447 498l27-1 18-1.500v3l7 .5v6l5 3 6 0 1-2h11v8h9v18h21v-3l23 2.500M564 545l12-13M576 532l-9 15M612 491l5 0v-5.500h60M570 550l10-20M583 546l9-25"
            />
            <path class="detail" d="M531 356c-1 5 1 8 4 12M534 369l1 8M567 507l4 5 6 2 4-2M569 501l-2 6 2 8 5-2M569 417l5-2-3 4 8-3-4-2M577 440l-8-1M572 437l4 3M583 414l2 1M613 420l7-2 8-1M592 525l12-12 4 5-13 7M604 500l6-4M598 508l8-8M610 509l-8 10M600 466h3l4-3M585 546l-5 2M571 410v3M732 269l4-1 4 2-2 2-5-2z" />
            <path class="coast solid" d="M706 146l6-7 4 2 10 2 9-3 6-6 4 1 9 3 6 5" />
            <path class="coast" d="M757 141l5 8 7 13 4 12 2 8 4 3M774 176l5 10M779 158l3 6-1 9-3 6 0 8M787 178l4 8M778 194l9 1-3 15-6-1M781 198l3 8M692 332v44M694 342l2 9-1 8 5 8-3 7-4 3M690 410l7 1M699 418l4-7 0-8M686 457l11-14M690 444l5 5M570 550l4-16M573 534l13-14M606 510l2 6-4 8M602 522l4-6M716 514l6 5 3 9-4 7-5 5M714 536l-2 4M716 541l0 8-4 8-3 5-4 2M641 580l1 13M645 576l1 16M648 577l-1 14M669 456l1 2M671 396l-2 4M657 556l-1 10-5 10" />
            <circle v-for="([x, y], i) in ponds" :key="i" class="pond" :cx="x" :cy="y" r=".8" />
          </g>
          <circle class="halo" cx="454.500" cy="546" r="21.500" />
          <path
            class="hand"
            d="M449.500 555c-2-3-4-5-4-7.500 1.500-1 3.500 0 5 1.500V537.500c0-1.600 2.200-1.600 2.200 0V536c0-1.600 2.500-1.600 2.500 0v1c0-1.600 2.500-1.600 2.500 0v1.500c0-1.600 3.800-1.600 3.800 0v9.500c0 4-2 8-6 8-3 0-4.500-1-6-1.500zM452.700 538v7M455.200 538v7M457.700 538v7"
          />
        </svg>
      </section>

      <aside class="dock right">
        <div class="dock-title">
          <span>Caja de herramientas de Procesos</span>
          <svg class="dock-buttons" viewBox="0 0 24 10"><rect x=".5" y=".5" width="9" height="9" rx="2" /><path d="M4.500 2.500h3v3h-3zM2.500 4.500v3h3" /><rect x="13.500" y=".5" width="9" height="9" rx="2" /><path class="cross" d="M16 3l4 4M20 3l-4 4" /></svg>
        </div>
        <div class="dock-tools">
          <svg class="icon" viewBox="0 0 24 24" v-html="icons.models" />
          <svg class="icon" viewBox="0 0 24 24" v-html="icons.scripts" />
          <svg class="icon" viewBox="0 0 24 24" v-html="icons.clock" />
          <svg class="icon" viewBox="0 0 24 24" v-html="icons.results" />
          <span class="sep" />
          <svg class="icon" viewBox="0 0 24 24" v-html="icons.inPlace" />
          <span class="sep" />
          <svg class="icon" viewBox="0 0 24 24" v-html="icons.wrench" />
        </div>
        <label class="search">
          <svg class="icon" viewBox="0 0 24 24" v-html="icons.search" />
          <input v-model="toolSearch" placeholder="Buscar..." />
        </label>
        <div class="tree providers">
          <div v-for="[icon, name] in providers" :key="name" class="row">
            <span class="twisty" />
            <svg class="icon" viewBox="0 0 24 24" v-html="icons[icon]" />
            <span class="label">{{ name }}</span>
          </div>
        </div>
      </aside>
    </main>

    <footer class="statusbar">
      <label class="locator">
        <svg class="icon" viewBox="0 0 24 24" v-html="icons.search" />
        <input v-model="locator" placeholder="Escriba para localizar (Ctrl+K)" />
      </label>
      <span class="caption coord">Coordenada</span>
      <span class="field coord-field">251937,2049240</span>
      <svg class="icon mouse" viewBox="0 0 24 24" v-html="icons.mouse" />
      <span class="caption scale">Escala</span>
      <span class="field scale-field">1:2919421<b class="drop"><i class="down" /></b></span>
      <svg class="icon lock" viewBox="0 0 24 24" v-html="icons.lock" />
      <span class="caption magnifier">Amplificador</span>
      <span class="field magnifier-field">100%<b class="spin"><i class="up" /><i class="down" /></b></span>
      <span class="caption rotation">Rotación</span>
      <span class="field rotation-field">0.0 °<b class="spin"><i class="up" /><i class="down" /></b></span>
      <span class="check" @click="render = !render"><svg v-if="render" viewBox="0 0 12 12"><path d="M2.500 6l2.500 3.500L9.500 2" /></svg></span>
      <span class="caption render">Representar</span>
      <svg class="icon crs" viewBox="0 0 24 24" v-html="icons.crs" />
      <span class="caption epsg">EPSG:32616</span>
      <svg class="icon messages" viewBox="0 0 24 24" v-html="icons.messages" />
    </footer>

    <div class="taskbar">
      <span class="start"><svg class="icon" viewBox="0 0 24 24" v-html="icons.windows" /></span>
      <label class="task-search">
        <svg class="icon" viewBox="0 0 24 24" v-html="icons.find" />
        <input v-model="taskSearch" placeholder="Escribe aquí para buscar" />
      </label>
      <span v-for="app in apps" :key="app.icon" class="app" :class="{ running: app.running, active: app.active }">
        <svg class="icon" viewBox="0 0 24 24" v-html="icons[app.icon]" />
      </span>
      <div class="tray">
        <svg v-for="name in tray" :key="name" class="icon" :class="name" viewBox="0 0 24 24" v-html="icons[name]" />
        <span class="lang">ESP</span>
        <span class="datetime"><span>11:24 a. m.</span><span>23/02/2021</span></span>
        <span class="notify"><svg class="icon" viewBox="0 0 24 24" v-html="icons.notify" /><b class="badge">2</b></span>
      </div>
    </div>
    <div class="blank-card" />
  </div>
</template>

<style>
body {
  margin: 0;
  overflow: hidden;
}
</style>

<style scoped>
.screen {
  position: relative;
  display: flex;
  flex-direction: column;
  box-sizing: border-box;
  width: 1280px;
  height: 720px;
  border-left: 1px solid #000;
  border-right: 1px solid #000;
  overflow: hidden;
  background: #efefef;
  color: #1b1b1b;
  font-family: "Open Sans", "Noto Sans", sans-serif;
  font-size: 11.3px;
  letter-spacing: -.3px;
  white-space: nowrap;
}

.screen * {
  box-sizing: border-box;
}

.icon {
  display: block;
  flex: none;
  overflow: visible;
  fill: none;
}

input {
  min-width: 0;
  flex: 1;
  padding: 0;
  border: 0;
  outline: 0;
  background: none;
  color: inherit;
  font: inherit;
  letter-spacing: inherit;
}

input::placeholder {
  color: #777;
  opacity: 1;
}

/* Title and menu */
.titlebar {
  display: flex;
  flex: none;
  align-items: center;
  height: 22px;
  padding: 0 14px 1px 2px;
  background: #fff;
}

.app-icon {
  width: 15px;
  height: 15px;
  margin-right: 4px;
}

.title {
  flex: 1;
}

.window-buttons {
  width: 100px;
  height: 20px;
  fill: none;
  stroke: #222;
  stroke-width: 1;
}

.menubar {
  display: flex;
  flex: none;
  align-items: center;
  gap: 12.6px;
  height: 18px;
  padding: 0 0 1px 9px;
  background: #eee;
}

.menu u {
  text-underline-offset: 2px;
}

/* Toolbars */
.toolbar {
  display: flex;
  flex: none;
  align-items: center;
  height: 37px;
  padding-bottom: 1px;
  border-top: 1px solid #e1e1e1;
  border-bottom: 1px solid #bdbdbd;
  background: linear-gradient(#fbfbfb, #f0f0f0);
}

.toolbar + .toolbar {
  height: 36px;
  padding-bottom: 0;
  border-top-color: #fff;
}

.tool {
  display: flex;
  flex: none;
  align-items: center;
  justify-content: center;
  width: 30.85px;
  height: 29px;
}

.tool .icon {
  width: 21px;
  height: 21px;
}

.tool.pressed {
  width: 29.8px;
  margin: 0 .5px;
  border: 1px solid #b5b5b5;
  border-radius: 3px;
  background: #dcdcdc;
}

.grip {
  flex: none;
  width: 5px;
  height: 16px;
  margin: 0 5px;
  background: radial-gradient(circle at 1px 1px, #cbcbcb .7px, transparent .9px) 0 0 / 3px 3px;
}

.toolbar > .grip:first-child {
  margin: 0 3px 0 4px;
}

.sep {
  flex: none;
  width: 1px;
  height: 22px;
  margin: 0 3px;
  background: #d0d0d0;
}

.space {
  flex: none;
  width: 105px;
}

.arrow {
  flex: none;
  width: 0;
  margin: 0 3px 0 0;
  border: 4px solid transparent;
  border-top: 4px solid #666;
  border-bottom: 0;
}

.more {
  margin-left: 3px;
  color: #222;
  font-size: 13px;
  letter-spacing: -1.5px;
}

/* Workspace */
.workspace {
  display: flex;
  flex: none;
  height: 543px;
}

.dock {
  display: flex;
  flex: none;
  flex-direction: column;
}

.dock.left {
  width: 242px;
  padding-right: 6px;
}

.dock.right {
  width: 287px;
}

.dock-title {
  display: flex;
  align-items: center;
  justify-content: space-between;
  height: 19px;
  padding: 0 1px 0 4px;
  font-size: 12.2px;
  letter-spacing: -.2px;
}

.dock-buttons {
  width: 24px;
  height: 10px;
  fill: none;
  stroke: #666;
}

.dock-buttons .cross {
  stroke: #333;
  stroke-width: 1.500;
}

.dock-tools {
  display: flex;
  align-items: center;
  gap: 8.5px;
  height: 28px;
  padding: 0 0 1px 7px;
}

.dock-tools .icon {
  width: 15px;
  height: 15px;
}

.browser {
  height: 200px;
  border: 1px solid #b9b9b9;
  background: #fff;
}

.browser-body {
  display: flex;
  height: 185px;
}

.tree {
  min-width: 0;
  flex: 1;
  padding-top: .6px;
  overflow: hidden;
}

.row {
  display: flex;
  align-items: center;
  height: 16.87px;
  padding-left: 5px;
}

.row.child {
  padding-left: 24px;
}

.row .icon {
  width: 14px;
  height: 14px;
  margin: 0 6px 0 9px;
}

.label {
  letter-spacing: -.43px;
}

.child .label {
  letter-spacing: -.36px;
}

.twisty {
  flex: none;
  width: 5px;
  height: 8px;
  margin: 0 1px 0 2px;
  border: 4px solid transparent;
  border-left: 4px solid #666;
  border-right: 0;
}

.twisty.open {
  width: 8px;
  height: 4px;
  margin: 0;
  border: 4px solid transparent;
  border-top: 4px solid #666;
  border-bottom: 0;
}

.vscroll {
  display: flex;
  flex-direction: column;
  width: 13px;
  border-left: 1px solid #c9c9c9;
  background: #e4e4e4;
}

.cap {
  display: flex;
  flex: none;
  align-items: center;
  justify-content: center;
  width: 12px;
  height: 13px;
  background: #f8f8f8;
}

.cap.end {
  margin-top: auto;
}

.vscroll .thumb {
  height: 61px;
  border-top: 1px solid #c9c9c9;
  border-bottom: 1px solid #c9c9c9;
  background: #fdfdfd;
}

.hscroll {
  display: flex;
  height: 13px;
  border-top: 1px solid #c9c9c9;
  background: #e4e4e4;
}

.hscroll .thumb {
  width: 64px;
  border-left: 1px solid #c9c9c9;
  border-right: 1px solid #c9c9c9;
  background: #fdfdfd;
}

.hscroll .cap.end {
  margin: 0 0 0 auto;
}

.corner {
  width: 13px;
  border-left: 1px solid #c9c9c9;
  background: #f1f1f1;
}

.up,
.down,
.back,
.forward {
  display: block;
  width: 0;
  border: 3.500px solid transparent;
}

.up {
  border-top: 0;
  border-bottom: 4px solid #666;
}

.down {
  border-bottom: 0;
  border-top: 4px solid #666;
}

.back {
  border-left: 0;
  border-right: 4px solid #555;
}

.forward {
  border-right: 0;
  border-left: 4px solid #555;
}

.layers-title {
  height: 20px;
  margin-top: 6px;
}

.layer-tools {
  height: 27px;
  padding-bottom: 2px;
}

.layer-tools .arrow {
  margin: 0 -2px 0 -4px;
}

.layers {
  flex: 1;
  border: 1px solid #b9b9b9;
  background: #fff;
}

.layer {
  display: flex;
  align-items: center;
  height: 18px;
  padding-left: 22px;
  background: #efefef;
}

.check {
  display: flex;
  flex: none;
  width: 12px;
  height: 12px;
  border: 1px solid #b6b6b6;
  border-radius: 2px;
  background: #fff;
}

.check svg {
  width: 11px;
  height: 11px;
  fill: none;
  stroke: #111;
  stroke-width: 2;
}

.swatch {
  width: 15px;
  height: 14px;
  margin: 0 6px;
  border: 1px solid #5163a4;
  background: #6878c0;
}

.layer-name {
  font-weight: 600;
  letter-spacing: -.18px;
  text-decoration: underline;
}

.canvas {
  width: 745px;
  margin-right: 5px;
  border: 1px solid #b9b9b9;
  background: #fff;
}

.map {
  display: block;
  width: 743px;
  height: 541px;
}

.land {
  fill: #957ab5;
  stroke: #35233f;
  stroke-width: .9;
}

.border,
.detail,
.coast {
  fill: none;
  stroke: #35233f;
  stroke-width: 1;
}

.detail {
  stroke-width: .9;
  stroke-dasharray: 5 1.500;
}

.coast {
  stroke: #222;
  stroke-width: 1.200;
  stroke-dasharray: 9 .8 4 .8;
}

.coast.solid {
  stroke: #4a4550;
  stroke-width: 1.500;
  stroke-dasharray: none;
}

.water {
  fill: #fff;
  stroke: #35233f;
  stroke-width: .7;
}

.pond {
  fill: #49335b;
}

.halo {
  fill: #f2e80d;
  fill-opacity: .86;
}

.hand {
  fill: #fff;
  stroke: #222;
  stroke-width: .9;
}

/* Processing toolbox */
.right .dock-tools .sep {
  height: 12px;
  margin: 0 -1.500px;
}

.search {
  display: flex;
  align-items: center;
  height: 21px;
  padding-left: 8px;
  border: 1px solid #b3b3b3;
  border-right: 0;
  border-radius: 3px 0 0 3px;
  background: #fff;
}

.search .icon {
  width: 12px;
  height: 12px;
  margin-right: 5px;
}

.providers {
  border: 1px solid #c4c4c4;
  border-right: 0;
  background: #fff;
}

.right .row {
  padding-left: 6px;
}

.right .row .icon {
  margin-left: 8px;
}

/* Status bar */
.statusbar {
  display: flex;
  flex: none;
  align-items: center;
  height: 27px;
  padding-left: 4px;
  font-size: 10.8px;
  letter-spacing: -.12px;
}

.locator {
  display: flex;
  align-items: center;
  width: 237px;
  height: 20px;
  padding-left: 8px;
  border: 1px solid #aaa;
  border-radius: 3px;
  background: #fff;
  letter-spacing: -.42px;
}

.locator .icon {
  width: 12px;
  height: 12px;
  margin-right: 5px;
}

.caption {
  flex: none;
  letter-spacing: -.3px;
}

.coord {
  width: 59px;
  margin-left: 237px;
  letter-spacing: -.42px;
}

.field {
  display: flex;
  flex: none;
  align-items: center;
  height: 20px;
  padding-left: 5px;
  border: 1px solid #aaa;
  border-radius: 3px;
  background: #fff;
}

.coord-field {
  width: 90px;
  letter-spacing: -.5px;
}

.mouse {
  width: 15px;
  height: 15px;
  margin: 0 12px 0 4px;
}

.scale {
  width: 32px;
}

.scale-field {
  width: 75px;
  padding-left: 3px;
  letter-spacing: -.4px;
}

.drop,
.spin {
  display: flex;
  flex-direction: column;
  align-items: center;
  justify-content: center;
  gap: 3px;
  width: 18px;
  height: 18px;
  margin-left: auto;
  border-left: 1px solid #bbb;
}

.spin {
  width: 12px;
}

.lock {
  width: 13px;
  height: 13px;
  margin: 0 7px 0 11px;
}

.magnifier {
  width: 58px;
  letter-spacing: -.7px;
}

.magnifier-field {
  width: 82px;
  padding-left: 4px;
}

.rotation {
  width: 48px;
  margin-left: 8px;
}

.rotation-field {
  width: 79px;
  padding-left: 4px;
}

.statusbar .check {
  margin: 0 3px 0 6px;
}

.render {
  width: 75px;
}

.crs {
  width: 13px;
  height: 13px;
  margin-right: 4px;
}

.epsg {
  width: 75px;
  letter-spacing: -.4px;
}

.messages {
  width: 16px;
  height: 15px;
}

/* Taskbar */
.taskbar {
  display: flex;
  flex: none;
  height: 37px;
  background: linear-gradient(90deg, #dcd8ec 0, #dcd8ec 46px, #d4e8f1 366px, #cdece8 580px, #ceeee1 1000px, #d3efe1);
}

.start {
  display: flex;
  align-items: center;
  justify-content: center;
  width: 45px;
}

.start .icon {
  width: 19px;
  height: 19px;
}

.task-search {
  display: flex;
  align-items: center;
  width: 322px;
  padding-left: 11px;
  border: 1px solid #c6c6ce;
  background: #fff;
  font-size: 13.5px;
  letter-spacing: -.13px;
}

.task-search .icon {
  width: 15px;
  height: 15px;
  margin-right: 10px;
}

.task-search input::placeholder {
  color: #444;
}

.app {
  display: flex;
  align-items: center;
  justify-content: center;
  width: 46.1px;
  padding: 1px 0 0;
  border-bottom: 2px solid transparent;
}

.app .icon {
  width: 22px;
  height: 22px;
}

.app.running {
  border-image: linear-gradient(90deg, transparent 5px, #1474cf 5px, #1474cf 42px, transparent 42px) 2;
}

.app.active {
  border-image: none;
  border-color: #1474cf;
  background: #effaf7;
}

.tray {
  display: flex;
  flex: 1;
  align-items: center;
  justify-content: flex-end;
  padding-right: 14px;
}

.tray .icon {
  width: 14px;
  height: 14px;
  margin-right: 8px;
}

.tray .mic {
  margin-right: 11px;
}

.lang {
  width: 18px;
  margin: 0 13px 0 3px;
  font-size: 10.500px;
  letter-spacing: -.1px;
}

.datetime {
  display: flex;
  flex-direction: column;
  align-items: center;
  gap: 2px;
  width: 56px;
  margin-right: 16px;
  font-size: 11px;
  line-height: 14px;
  letter-spacing: -.3px;
}

.notify {
  position: relative;
  width: 22px;
}

.tray .notify .icon {
  width: 18px;
  height: 18px;
  margin: 0;
}

.badge {
  position: absolute;
  left: 8px;
  top: 7px;
  width: 14px;
  height: 14px;
  border: 1px solid #888;
  border-radius: 50%;
  background: #dfe8e4;
  font-size: 10px;
  font-weight: 400;
  line-height: 12px;
  text-align: center;
}

/* Card lying over the status bar and the taskbar */
.blank-card {
  position: absolute;
  left: 781px;
  top: 674px;
  width: 224px;
  height: 46px;
  border-radius: 7px;
  background: #fff;
  box-shadow: 0 0 6px rgba(0, 0, 0, .18);
}
</style>
